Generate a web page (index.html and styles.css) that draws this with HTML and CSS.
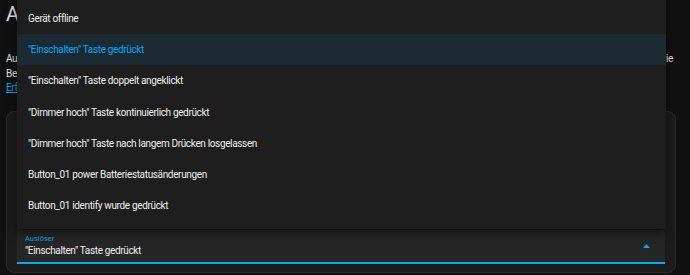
FILE: index.html
```html
<!DOCTYPE html>
<html lang="de">
<head>
    <meta charset="UTF-8">
    <meta name="viewport" content="width=device-width, initial-scale=1.0"/>
    <title>Automation bearbeiten</title>
    <link rel="stylesheet" href="styles.css">
</head>
<body>
    <div class="page">
        <h1>Automation bearbeiten</h1>
        <p class="desc">
            <span class="line">Auslöser starten die Verarbeitung einer Automatisierungsregel. Es ist möglich, mehrere Auslöser für dieselbe Regel zu definieren. Startet ein Auslöser, prüft er die</span>
            <span class="line last">Bedingungen, falls vorhanden, und ruft die Aktion auf.</span>
            <a href="#">Erfahre mehr über Auslöser</a>
        </p>

        <div class="card">
            <div class="field">
                <span class="field-label">Auslöser</span>
                <span class="field-value">"Einschalten" Taste gedrückt</span>
                <svg class="arrow" width="7" height="4" viewBox="0 0 7 4"><path d="M0 4 L3.5 0 L7 4 Z" fill="#03a9f4"/></svg>
            </div>
        </div>

        <!--dropdown opened over the field-->
        <ul class="menu">
            <li>Gerät offline</li>
            <li class="selected">"Einschalten" Taste gedrückt</li>
            <li>"Einschalten" Taste doppelt angeklickt</li>
            <li>"Dimmer hoch" Taste kontinuierlich gedrückt</li>
            <li>"Dimmer hoch" Taste nach langem Drücken losgelassen</li>
            <li>Button_01 power Batteriestatusänderungen</li>
            <li>Button_01 identify wurde gedrückt</li>
        </ul>
    </div>
</body>
</html>
```

FILE: styles.css
```css
* {
  font-family: Roboto, "Noto Sans", sans-serif;
  box-sizing: border-box;
}
body {
  margin: 0;
  background: #111111;
  color: #e1e1e1;
}
.page {
  position: relative;
  padding: 0 17px 0 6px;
}
h1 {
  margin: 0;
  padding-top: 2px;
  font-size: 20px;
  font-weight: 400;
  line-height: 24px;
  white-space: nowrap;
  overflow: hidden;
}
.desc {
  margin: 26px 0 0;
  font-size: 10px;
  letter-spacing: -0.35px;
  line-height: 14.5px;
}
.desc .line {
  display: block;
  text-align: justify;
  text-align-last: justify;
}
.desc .line.last {
  text-align-last: left;
}
.desc a {
  color: #03a9f4;
}
.card {
  margin-top: 15px;
  margin-right: -3px;
  height: 162px;
  background: #1c1c1c;
  border: 1px solid #2a2a2a;
  border-radius: 8px;
  padding: 0 10px 8px 10px;
  display: flex;
  flex-direction: column;
  justify-content: flex-end;
}
.field {
  position: relative;
  height: 34px;
  background: #262626;
  border-radius: 4px 4px 0 0;
  border-bottom: 2px solid #03a9f4;
  padding: 4px 8px 0;
  display: flex;
  flex-direction: column;
}
.field-label {
  font-size: 7.5px;
  line-height: 10px;
  color: #03a9f4;
}
.field-value {
  font-size: 10px;
  letter-spacing: -0.35px;
  line-height: 14px;
  color: #eeeeee;
}
.arrow {
  position: absolute;
  right: 15px;
  top: 14px;
}
.menu {
  position: absolute;
  top: -5px;
  left: 17px;
  width: 649px;
  margin: 0;
  padding: 8px 0;
  list-style: none;
  background: #1e1e1e;
  box-shadow: 0 4px 10px rgba(0, 0, 0, 0.5);
}
.menu li {
  height: 31.2px;
  line-height: 31.2px;
  padding-left: 11px;
  font-size: 10px;
  letter-spacing: -0.35px;
  color: #eeeeee;
}
.menu li.selected {
  background: #1b2a33;
  color: #03a9f4;
}
```
